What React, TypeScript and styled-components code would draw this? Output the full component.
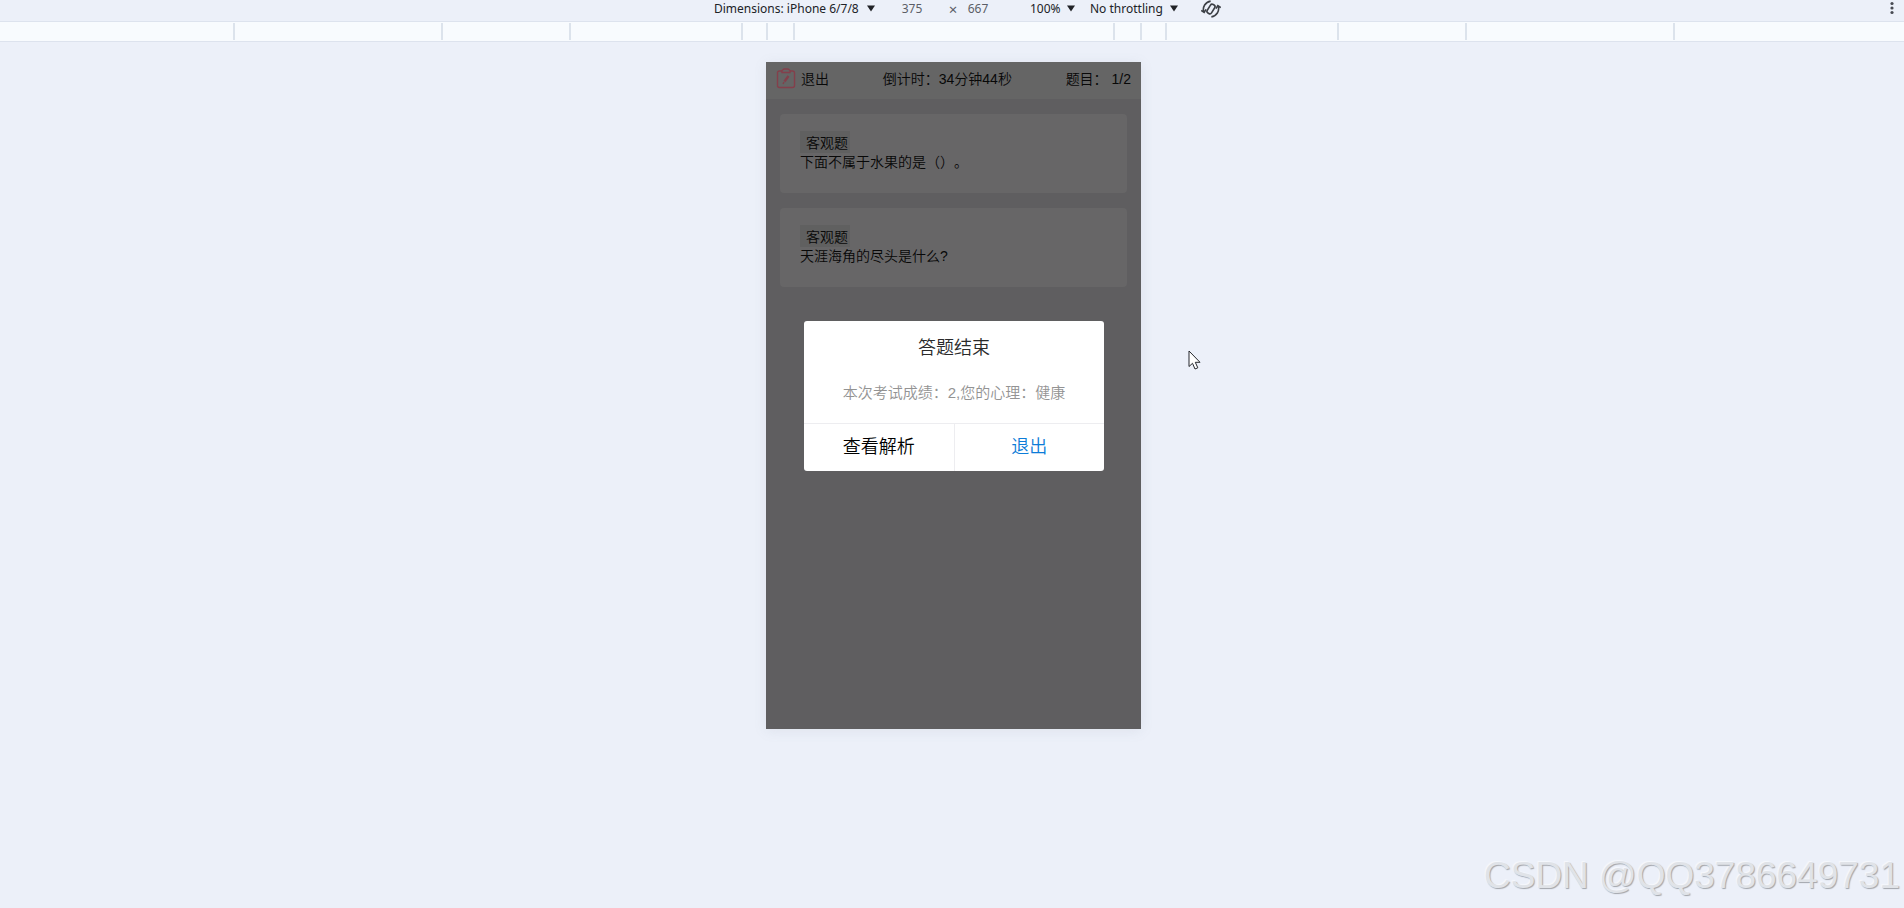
import React from 'react';
import styled, { createGlobalStyle } from 'styled-components';

const Global = createGlobalStyle`
  * { box-sizing: border-box; }
  html, body, #root { height: 100%; }
  body { margin: 0; background: #ecf0f9; font-family: "Noto Sans", "Noto Sans CJK SC", sans-serif; }
  button, input, select { font: inherit; color: inherit; border: 0; background: none; padding: 0; margin: 0; }
  h2, p { margin: 0; font-weight: inherit; }
`;

const Page = styled.div`
  min-height: 100%;
  display: flex;
  flex-direction: column;
  position: relative;
  overflow: hidden;
`;

const Toolbar = styled.header`
  display: flex;
  align-items: center;
  justify-content: center;
  height: 22px;
  padding: 0 0 4px 31px;
  border-bottom: 1px solid #dde3ee;
  font-size: 12px;
  line-height: 16px;
  color: #202227;
  position: relative;
`;

const Picker = styled.label<{ $width: number; $gap: number }>`
  display: flex;
  align-items: center;
  width: ${p => p.$width}px;
  margin-right: ${p => p.$gap}px;
  select { appearance: none; flex: 1; min-width: 0; height: 16px; outline: 0; }
  svg { flex: none; }
`;

const SizeFields = styled.div`
  display: flex;
  align-items: center;
  margin-right: 40px;
`;

const SizeInput = styled.input`
  width: 24px;
  height: 16px;
  text-align: center;
  color: #5b5e66;
`;

const Times = styled.span`
  width: 16px;
  margin: 0 5px 0 21px;
  font-size: 15px;
  text-align: center;
  color: #5b5e66;
`;

const ToolButton = styled.button`
  display: flex;
  width: 20px;
  height: 16px;
  align-items: center;
  justify-content: center;
  svg { flex: none; }
`;

const MoreButton = styled(ToolButton)`
  position: absolute;
  right: 2px;
  top: 0;
`;

const Ruler = styled.div`
  display: flex;
  height: 20px;
  padding: 1px 0 1px 3px;
  background: #f8fbfe;
  border-bottom: 1px solid #dde3ee;
`;

const Segment = styled.div<{ $width?: number; $side?: 'left' | 'right' }>`
  flex: ${p => (p.$width ? `0 0 ${p.$width}px` : '1 1 0')};
  border-left: ${p => (p.$side === 'left' ? '2px solid #dce3ec' : '0')};
  border-right: ${p => (p.$side === 'right' ? '2px solid #dce3ec' : '0')};
`;

const Stage = styled.main`
  flex: 1;
  display: flex;
  justify-content: center;
  align-items: flex-start;
  padding: 20px 0 20px 3px;
`;

const Phone = styled.section`
  position: relative;
  width: 375px;
  height: 667px;
  background: #5f5e60;
  color: #080808;
  font-family: "Liberation Sans", "Noto Sans CJK SC", sans-serif;
  font-size: 14px;
  font-weight: 350;
  line-height: 20px;
  text-spacing-trim: space-all;
  box-shadow: 0 2px 12px rgba(120, 130, 150, 0.12);
`;

const ExamBar = styled.div`
  display: flex;
  align-items: center;
  justify-content: space-between;
  height: 37px;
  padding: 0 10px 4px;
  background: #656565;
`;

const ExitButton = styled.button`
  display: flex;
  align-items: center;
  gap: 5px;
`;

const Questions = styled.div`
  display: flex;
  flex-direction: column;
  gap: 15px;
  padding: 15px 14px;
`;

const Card = styled.article`
  height: 79px;
  padding: 17px 20px;
  background: #676667;
  border-radius: 4px;
`;

const Tag = styled.span`
  display: block;
  width: 50px;
  height: 22px;
  padding: 2px 0 0 6px;
  background: #606060;
`;

const Question = styled.p`
  line-height: 18px;
`;

const Dialog = styled.div`
  position: absolute;
  left: 38px;
  right: 37px;
  top: 259px;
  background: #fff;
  border-radius: 3px;
  text-align: center;
  overflow: hidden;
`;

const DialogTitle = styled.h2`
  padding-top: 14px;
  font-size: 18px;
  line-height: 26px;
  color: #2a2a2a;
`;

const Message = styled.p`
  padding: 21px 0 19px;
  font-size: 15px;
  line-height: 22px;
  color: #939393;
`;

const Actions = styled.div`
  display: flex;
  border-top: 1px solid #ededf0;
`;

const Action = styled.button<{ $primary?: boolean }>`
  flex: 1;
  height: 47px;
  padding-bottom: 2px;
  font-size: 18px;
  color: ${p => (p.$primary ? '#0c7cd8' : '#000')};
  & + & { border-left: 1px solid #ededf0; }
`;

const Pointer = styled.svg`
  position: absolute;
  left: 62.4%;
  top: 350px;
`;

const Watermark = styled.div`
  position: absolute;
  right: 4px;
  bottom: 11px;
  font-family: "Liberation Sans", sans-serif;
  font-size: 37px;
  line-height: 42px;
  color: #e0e3e8;
  text-shadow: 1px 1px 1px #a2a5ab, -1px -1px 1px #f6f8fc;
`;

const Arrow = () => (
  <svg width="8" height="7" viewBox="0 0 8 7" aria-hidden="true"><path d="M0 0.5h8L4 6.5z" fill="#202227" /></svg>
);

const ruler: { width?: number; side?: 'left' | 'right' }[] = [
  { side: 'right' },
  { width: 208, side: 'right' },
  { width: 128, side: 'right' },
  { width: 172, side: 'right' },
  { width: 25, side: 'right' },
  { width: 27, side: 'right' },
  { width: 318 },
  { width: 27, side: 'left' },
  { width: 25, side: 'left' },
  { width: 172, side: 'left' },
  { width: 128, side: 'left' },
  { width: 208, side: 'left' },
  { side: 'left' },
];

const questions = ['下面不属于水果的是（）。', '天涯海角的尽头是什么?'];

export default function App() {
  return (
    <Page>
      <Global />
      <Toolbar>
        <Picker $width={161} $gap={25}>
          <select aria-label="Device"><option>Dimensions: iPhone 6/7/8</option></select><Arrow />
        </Picker>
        <SizeFields>
          <SizeInput aria-label="Width" defaultValue="375" />
          <Times>×</Times>
          <SizeInput aria-label="Height" defaultValue="667" />
        </SizeFields>
        <Picker $width={45} $gap={15}>
          <select aria-label="Zoom"><option>100%</option></select><Arrow />
        </Picker>
        <Picker $width={88} $gap={23}>
          <select aria-label="Throttling"><option>No throttling</option></select><Arrow />
        </Picker>
        <ToolButton aria-label="Rotate">
          <svg width="20" height="20" viewBox="0 0 20 20" fill="none" stroke="#3c3f45" strokeWidth="1.6">
            <g transform="rotate(32 10 10)">
              <rect x="7.500" y="5" width="5" height="10" rx="2" />
              <path d="M5.500 3.500C1.500 7 1.500 13 5.500 16.500M2.500 16.500h3.500v-3.500" />
              <path d="M14.500 16.500C18.500 13 18.500 7 14.500 3.500M17.500 3.500H14v3.500" />
            </g>
          </svg>
        </ToolButton>
        <MoreButton aria-label="More options">
          <svg width="4" height="14" viewBox="0 0 4 14" fill="#474a52">
            <circle cx="2" cy="2.5" r="1.6" /><circle cx="2" cy="7" r="1.6" /><circle cx="2" cy="11.5" r="1.6" />
          </svg>
        </MoreButton>
      </Toolbar>
      <Ruler>
        {ruler.map((s, i) => <Segment key={i} $width={s.width} $side={s.side} />)}
      </Ruler>
      <Stage>
        <Phone>
          <ExamBar>
            <ExitButton>
              <svg width="20" height="21" viewBox="0 0 20 21" fill="none" stroke="#843f4b" strokeWidth="1.4">
                <path d="M6 3H3.5A2 2 0 0 0 1.500 5v12.500a2 2 0 0 0 2 2h13a2 2 0 0 0 2-2V5a2 2 0 0 0-2-2H14" />
                <path d="M6 4.500V2.500L8 1h4l2 1.500v2z" />
                <path d="M12.500 8L8.500 13.500" strokeWidth="2.4" /><path d="M8 14l-1 2" />
              </svg>
              退出
            </ExitButton>
            <span>倒计时：34分钟44秒</span>
            <span>题目： 1/2</span>
          </ExamBar>
          <Questions>
            {questions.map(q => (
              <Card key={q}><Tag>客观题</Tag><Question>{q}</Question></Card>
            ))}
          </Questions>
          <Dialog role="dialog" aria-labelledby="result-title">
            <DialogTitle id="result-title">答题结束</DialogTitle>
            <Message>本次考试成绩：2,您的心理：健康</Message>
            <Actions>
              <Action>查看解析</Action>
              <Action $primary>退出</Action>
            </Actions>
          </Dialog>
        </Phone>
      </Stage>
      <Pointer width="13" height="20" viewBox="0 0 13 20" aria-hidden="true">
        <path d="M1 1v15.500l3.500-3.200 2.500 5.700 2.800-1.200-2.500-5.500H12z" fill="#fff" stroke="#25272c" strokeWidth="1" />
      </Pointer>
      <Watermark>CSDN @QQ3786649731</Watermark>
    </Page>
  );
}
